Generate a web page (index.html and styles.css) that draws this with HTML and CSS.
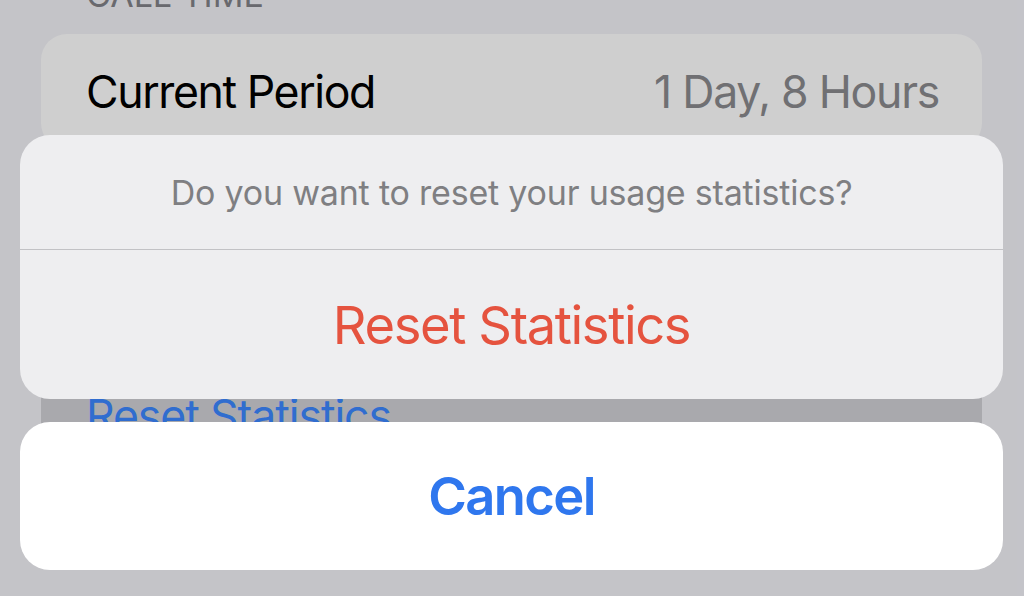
FILE: index.html
```html
<!DOCTYPE html>
<html lang="en">
<head>
<meta charset="utf-8">
<title>Reset Statistics</title>
<link rel="stylesheet" href="styles.css">
</head>
<body>
<div class="screen">
  <div class="page">
    <div class="section-header">CALL TIME</div>
    <div class="group">
      <div class="row">
        <span class="row-label">Current Period</span>
        <span class="row-value">1 Day, 8 Hours</span>
      </div>
    </div>
    <div class="group group-reset">
      <div class="row row-highlight">
        <span class="row-action">Reset Statistics</span>
      </div>
    </div>
  </div>

  <div class="overlay">
    <div class="sheet-group">
      <div class="sheet-message">Do you want to reset your usage statistics?</div>
      <div class="sheet-button destructive">Reset Statistics</div>
    </div>
    <div class="sheet-cancel">Cancel</div>
  </div>
</div>
</body>
</html>
```

FILE: styles.css
```css
* { box-sizing: border-box; }

html, body {
  margin: 0;
  padding: 0;
}

body {
  width: 1024px;
  height: 596px;
  overflow: hidden;
  background: #f2f2f7;
  font-family: Inter, "Noto Sans", "Liberation Sans", sans-serif;
}

.screen {
  position: relative;
  width: 1024px;
  height: 596px;
  overflow: hidden;
}

.page {
  display: flex;
  flex-direction: column;
}

.section-header {
  margin: -22px 0 22px 86px;
  height: 34px;
  line-height: 34px;
  font-size: 34px;
  color: #828288;
  letter-spacing: 0;
}

.group {
  margin: 0 42px 0 41px;
  background: #ffffff;
  border-radius: 26px;
  overflow: hidden;
}

.group-reset {
  margin-top: 209px;
}

.row {
  height: 115px;
  display: flex;
  align-items: center;
  justify-content: space-between;
  padding: 0 43px 0 45px;
  font-size: 44.6px;
  letter-spacing: -1.4px;
}

.row-label { color: #000000; }
.row-value { color: #8a8a8e; letter-spacing: -1.25px; }

.row-highlight { background: #d1d1d6; }

.row-action { color: #3c87ff; letter-spacing: -1.1px; }

.overlay {
  position: absolute;
  inset: 0;
  background: rgba(0, 0, 0, 0.19);
  display: flex;
  flex-direction: column;
  justify-content: flex-end;
  gap: 23px;
  padding: 0 21px 26px 20px;
}

.sheet-group {
  background: #eeeef0;
  border-radius: 30px;
  overflow: hidden;
  display: flex;
  flex-direction: column;
}

.sheet-message {
  height: 115px;
  display: flex;
  align-items: center;
  justify-content: center;
  font-size: 34px;
  color: #7f7f82;
  letter-spacing: -0.2px;
  border-bottom: 1px solid #c2c2c5;
}

.sheet-button {
  height: 149px;
  display: flex;
  align-items: center;
  justify-content: center;
  font-size: 52.5px;
  letter-spacing: -1.4px;
}

.destructive { color: #e5533f; }

.sheet-cancel {
  height: 148px;
  background: #ffffff;
  border-radius: 30px;
  display: flex;
  align-items: center;
  justify-content: center;
  font-size: 52.5px;
  font-weight: 600;
  color: #2f77ee;
  letter-spacing: -1.6px;
}
```
